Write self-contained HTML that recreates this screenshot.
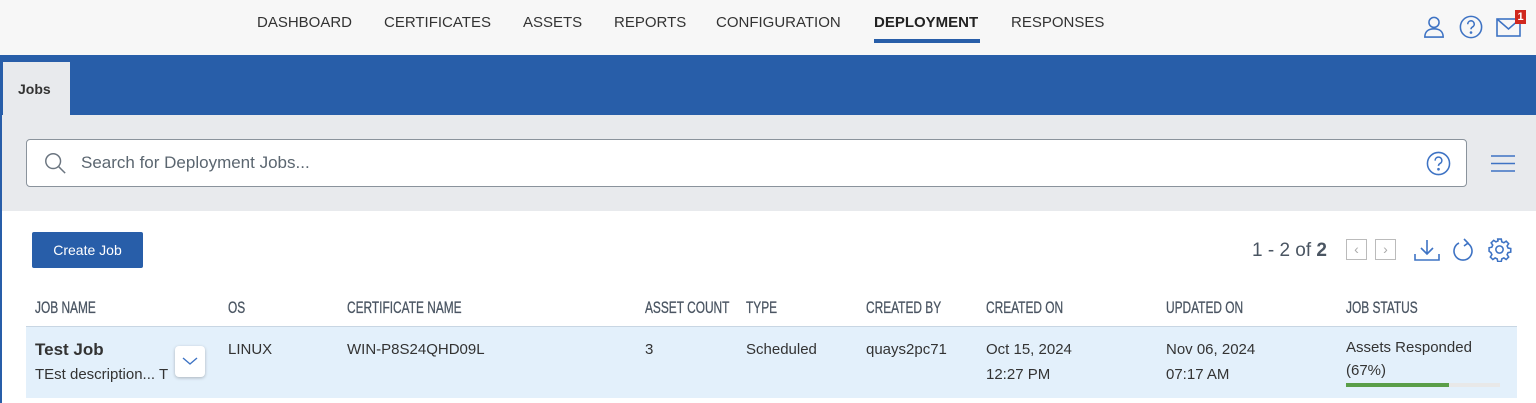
<!DOCTYPE html>
<html><head><meta charset="utf-8"><style>
*{margin:0;padding:0;box-sizing:border-box}
body{width:1536px;height:403px;overflow:hidden;background:#fff;font-family:"Liberation Sans",sans-serif;color:#333;position:relative}
.a{position:absolute}
.nav{top:0;left:0;width:1536px;height:55px;background:#f7f7f7}
.nav span{position:absolute;top:14px;font-size:15px;color:#333;letter-spacing:0}
.band{top:55px;left:0;width:1536px;height:60px;background:#285ea9}
.gray{top:115px;left:2px;width:1534px;height:96px;background:#e8eaed}
.hd{position:absolute;top:298px;font-size:17px;color:#4a5562;display:inline-block;transform:scaleX(.7);transform-origin:left;-webkit-text-stroke:.3px #4a5562}
.cell{position:absolute;font-size:15px;color:#333}
</style></head><body>
<div class="a nav">
<span style="left:257px">DASHBOARD</span>
<span style="left:384px">CERTIFICATES</span>
<span style="left:523px">ASSETS</span>
<span style="left:614px">REPORTS</span>
<span style="left:716px">CONFIGURATION</span>
<span style="left:874px;font-weight:bold;color:#222">DEPLOYMENT</span>
<div class="a" style="left:874px;top:39px;width:106px;height:4px;background:#285ea9"></div>
<span style="left:1011px">RESPONSES</span>
<svg class="a" style="left:1423px;top:15px" width="22" height="24" viewBox="0 0 24 26" fill="none" stroke="#3e73c4" stroke-width="1.7"><circle cx="12" cy="8" r="5.5"/><path d="M2 24c0-6 4-9 10-9s10 3 10 9z"/></svg>
<svg class="a" style="left:1459px;top:15px" width="24" height="24" viewBox="0 0 26 26" fill="none" stroke="#3e73c4" stroke-width="1.7"><circle cx="13" cy="13" r="11.5"/><path d="M9.5 10a3.5 3.5 0 1 1 5 3c-1.2.7-1.5 1.3-1.5 2.5"/><circle cx="13" cy="19" r=".6" fill="#3e73c4"/></svg>
<svg class="a" style="left:1496px;top:17px" width="26" height="20" viewBox="0 0 26 20" fill="none" stroke="#3e73c4" stroke-width="1.6"><rect x="1" y="2" width="23" height="17"/><path d="M1 2l11.5 10L24 2"/></svg>
<div class="a" style="left:1515px;top:10px;width:11px;height:14px;background:#d0281e;color:#fff;font-size:11px;font-weight:bold;text-align:center;line-height:14px">1</div>
</div>
<div class="a band"></div>
<div class="a" style="left:0;top:55px;width:2px;height:348px;background:#285ea9"></div>
<div class="a" style="left:3px;top:62px;width:67px;height:53px;background:#e8eaed;font-size:14px;font-weight:bold;color:#333;padding:19px 0 0 15px">Jobs</div>
<div class="a gray"></div>
<div class="a" style="left:26px;top:139px;width:1441px;height:48px;background:#fff;border:1px solid #8a939c;border-radius:4px"></div>
<svg class="a" style="left:43px;top:151px" width="24" height="24" viewBox="0 0 26 26" fill="none" stroke="#6b7580" stroke-width="1.6"><circle cx="11" cy="11" r="8"/><path d="M17 17l7 7"/></svg>
<div class="a" style="left:81px;top:153px;font-size:17px;color:#5b6670">Search for Deployment Jobs...</div>
<svg class="a" style="left:1426px;top:151px" width="25" height="25" viewBox="0 0 26 26" fill="none" stroke="#3e73c4" stroke-width="1.6"><circle cx="13" cy="13" r="11.5"/><path d="M9.5 10a3.5 3.5 0 1 1 5 3c-1.2.7-1.5 1.3-1.5 2.5"/><circle cx="13" cy="19" r=".6" fill="#3e73c4"/></svg>
<svg class="a" style="left:1490px;top:155px" width="26" height="17" viewBox="0 0 26 17" stroke="#3e73c4" stroke-width="1.6"><path d="M1 1h24M1 8.5h24M1 16h24"/></svg>
<div class="a" style="left:32px;top:232px;width:111px;height:36px;background:#285ea9;border-radius:2px;color:#fff;font-size:14px;text-align:center;line-height:36px">Create Job</div>
<div class="a" style="left:1252px;top:240px;font-size:19px;color:#4a5562">1 - 2 of <b>2</b></div>
<div class="a" style="left:1346px;top:239px;width:21px;height:21px;border:1px solid #bbb;color:#aaa;font-size:14px;text-align:center;line-height:19px">&lsaquo;</div>
<div class="a" style="left:1375px;top:239px;width:21px;height:21px;border:1px solid #bbb;color:#aaa;font-size:14px;text-align:center;line-height:19px">&rsaquo;</div>
<svg class="a" style="left:1414px;top:238px" width="26" height="24" viewBox="0 0 26 24" fill="none" stroke="#3e73c4" stroke-width="1.6"><path d="M13 2v14M7 10l6 6 6-6M1 16v6h24v-6"/></svg>
<svg class="a" style="left:1452px;top:237px" width="22" height="26" viewBox="0 0 22 26" fill="none" stroke="#3e73c4" stroke-width="1.6"><path d="M15 6a9 9 0 1 1-8 0"/><path d="M12 2l4 4-4 3"/></svg>
<svg class="a" style="left:1487px;top:237px" width="25" height="25" viewBox="0 0 24 24" fill="none" stroke="#3e73c4" stroke-width="1.5"><circle cx="12" cy="12" r="3.5"/><path d="M10.3 2h3.4l.5 2.6 2 .9 2.2-1.5 2.4 2.4-1.5 2.2.9 2 2.6.5v3.4l-2.6.5-.9 2 1.5 2.2-2.4 2.4-2.2-1.5-2 .9-.5 2.6h-3.4l-.5-2.6-2-.9-2.2 1.5-2.4-2.4 1.5-2.2-.9-2L2 13.7v-3.4l2.6-.5.9-2L4 5.6 6.4 3.2l2.2 1.5 2-.9z"/></svg>
<span class="hd" style="left:35px">JOB NAME</span>
<span class="hd" style="left:228px">OS</span>
<span class="hd" style="left:347px">CERTIFICATE NAME</span>
<span class="hd" style="left:645px">ASSET COUNT</span>
<span class="hd" style="left:746px">TYPE</span>
<span class="hd" style="left:866px">CREATED BY</span>
<span class="hd" style="left:986px">CREATED ON</span>
<span class="hd" style="left:1166px">UPDATED ON</span>
<span class="hd" style="left:1346px">JOB STATUS</span>
<div class="a" style="left:26px;top:326px;width:1491px;height:72px;background:#e3f0fb;border-top:1px solid #c8d6e3"></div>
<div class="cell" style="left:35px;top:340px;font-size:17px;font-weight:bold">Test Job</div>
<div class="cell" style="left:35px;top:366px">TEst description... T</div>
<div class="a" style="left:175px;top:346px;width:30px;height:31px;background:#fff;border-radius:4px;box-shadow:0 1px 3px rgba(0,0,0,.25)"></div>
<svg class="a" style="left:181px;top:356px" width="18" height="10" viewBox="0 0 18 10" fill="none" stroke="#3e73c4" stroke-width="1.4"><path d="M2 2l7 6 7-6"/></svg>
<div class="cell" style="left:228px;top:341px">LINUX</div>
<div class="cell" style="left:347px;top:341px">WIN-P8S24QHD09L</div>
<div class="cell" style="left:645px;top:341px">3</div>
<div class="cell" style="left:746px;top:341px">Scheduled</div>
<div class="cell" style="left:866px;top:341px">quays2pc71</div>
<div class="cell" style="left:986px;top:341px">Oct 15, 2024</div>
<div class="cell" style="left:986px;top:366px">12:27 PM</div>
<div class="cell" style="left:1166px;top:341px">Nov 06, 2024</div>
<div class="cell" style="left:1166px;top:366px">07:17 AM</div>
<div class="cell" style="left:1346px;top:339px">Assets Responded</div>
<div class="cell" style="left:1346px;top:362px">(67%)</div>
<div class="a" style="left:1346px;top:383px;width:154px;height:4px;background:#e8e8e8"></div>
<div class="a" style="left:1346px;top:383px;width:103px;height:4px;background:#5a9e48"></div>
</body></html>
